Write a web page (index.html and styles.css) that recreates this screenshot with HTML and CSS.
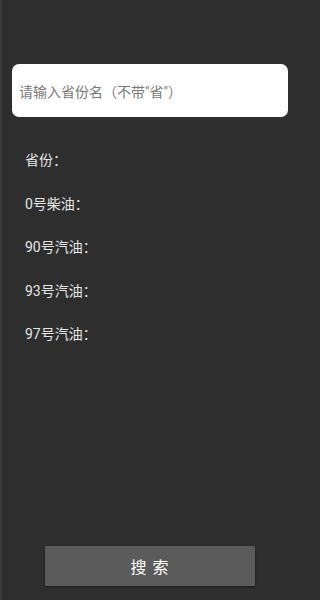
FILE: index.html
```html
<!DOCTYPE html>
<html lang="zh">
<head>
<meta charset="utf-8">
<link rel="stylesheet" href="styles.css">
</head>
<body>
<div class="page">
  <div class="search-box">
    <span class="placeholder">请输入省份名（不带"省"）</span>
  </div>
  <ul class="results">
    <li>省份：</li>
    <li>0号柴油：</li>
    <li>90号汽油：</li>
    <li>93号汽油：</li>
    <li>97号汽油：</li>
  </ul>
  <div class="btn-wrap">
    <button class="search-btn">搜 索</button>
  </div>
</div>
</body>
</html>
```
FILE: styles.css
```css
html, body {
  margin: 0;
  padding: 0;
  background: #2e2e2e;
}
body {
  font-family: Roboto, "Noto Sans CJK SC", sans-serif;
}
.page {
  width: 300px;
  height: 600px;
  box-sizing: border-box;
  display: flex;
  flex-direction: column;
  padding: 64px 12px 14px 12px;
  border-left: 2px solid #393939;
}
.search-box {
  height: 53px;
  background: #ffffff;
  border-radius: 7px;
  display: flex;
  align-items: center;
  padding-left: 7px;
  margin-left: -2px;
}
.placeholder {
  color: #7a7a7a;
  font-size: 14px;
}
.results {
  list-style: none;
  margin: 22px 0 0 0;
  padding: 0 0 0 11px;
}
.results li {
  height: 43.5px;
  line-height: 43.5px;
  color: #e6e6e6;
  font-size: 14px;
}
.btn-wrap {
  margin-top: auto;
  display: flex;
  justify-content: center;
  margin-left: -2px;
}
.search-btn {
  width: 210px;
  height: 40px;
  background: #5b5b5b;
  border: none;
  border-radius: 1px;
  color: #ffffff;
  font-family: Roboto, "Noto Sans CJK SC", sans-serif;
  font-size: 16px;
  letter-spacing: 1px;
  box-shadow: 0 1px 2px rgba(0,0,0,0.5);
}
```
